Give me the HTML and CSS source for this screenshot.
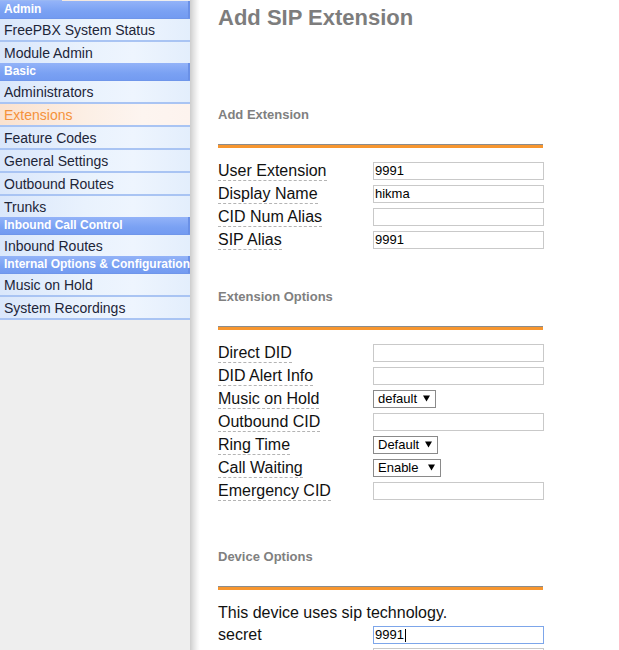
FILE: index.html
```html
<!DOCTYPE html>
<html lang="en">
<head>
<meta charset="utf-8">
<title>Add SIP Extension</title>
<link rel="stylesheet" href="styles.css">
</head>
<body>
<div class="page">
  <nav class="sidebar">
    <div class="tabstrip"><span class="tab-a"></span><span class="tab-b"></span></div>
    <div class="menu">
      <div class="cat">Admin</div>
      <a class="item">FreePBX System Status</a>
      <a class="item">Module Admin</a>
      <div class="cat">Basic</div>
      <a class="item">Administrators</a>
      <a class="item active">Extensions</a>
      <a class="item">Feature Codes</a>
      <a class="item">General Settings</a>
      <a class="item">Outbound Routes</a>
      <a class="item">Trunks</a>
      <div class="cat">Inbound Call Control</div>
      <a class="item">Inbound Routes</a>
      <div class="cat">Internal Options &amp; Configuration</div>
      <a class="item">Music on Hold</a>
      <a class="item">System Recordings</a>
    </div>
  </nav>
  <div class="shade"></div>
  <main class="content">
    <h1 class="title">Add SIP Extension</h1>

    <h3 class="section section-first">Add Extension</h3>
    <div class="rule"></div>
    <div class="rows">
      <span class="label">User Extension</span><input class="field" value="9991">
      <span class="label">Display Name</span><input class="field" value="hikma">
      <span class="label">CID Num Alias</span><input class="field" value="">
      <span class="label">SIP Alias</span><input class="field" value="9991">
    </div>

    <h3 class="section section-second">Extension Options</h3>
    <div class="rule"></div>
    <div class="rows">
      <span class="label">Direct DID</span><input class="field" value="">
      <span class="label">DID Alert Info</span><input class="field" value="">
      <span class="label">Music on Hold</span>
      <div class="select sel-moh"><span>default</span><svg class="arrow" width="7" height="7" viewBox="0 0 7 7"><polygon points="0,0.5 7,0.5 3.5,6.5" fill="#000"/></svg></div>
      <span class="label">Outbound CID</span><input class="field" value="">
      <span class="label">Ring Time</span>
      <div class="select sel-ring"><span>Default</span><svg class="arrow" width="7" height="7" viewBox="0 0 7 7"><polygon points="0,0.5 7,0.5 3.5,6.5" fill="#000"/></svg></div>
      <span class="label">Call Waiting</span>
      <div class="select sel-cw"><span>Enable</span><svg class="arrow" width="7" height="7" viewBox="0 0 7 7"><polygon points="0,0.5 7,0.5 3.5,6.5" fill="#000"/></svg></div>
      <span class="label">Emergency CID</span><input class="field" value="">
    </div>

    <h3 class="section section-third">Device Options</h3>
    <div class="rule"></div>
    <p class="note">This device uses sip technology.</p>
    <div class="rows rows-device">
      <span class="plain">secret</span><div class="field focused">9991<span class="caret"></span></div>
      <span class="plain"></span><input class="field" value="">
    </div>
  </main>
</div>
</body>
</html>
```

FILE: styles.css
```css
html, body {
  margin: 0;
  padding: 0;
  height: 100%;
  overflow: hidden;
  background: #fff;
}

body {
  font-family: "Liberation Sans", Arial, sans-serif;
  color: #111;
}

.page {
  display: flex;
  min-height: 100vh;
}

/* ---------- sidebar ---------- */
.sidebar {
  width: 190px;
  flex: 0 0 190px;
  background: #eeeeee;
}

.tabstrip {
  display: flex;
  height: 1px;
}
.tab-a { width: 62px; background: #9ab8f4; }
.tab-b { width: 58px; background: #f3e8df; }

.menu {
  display: flex;
  flex-direction: column;
}

.cat {
  box-sizing: border-box;
  height: 18px;
  padding: 2px 4px 0;
  border-bottom: 1px solid #6f96ea;
  font-size: 12px;
  line-height: 13px;
  font-weight: bold;
  color: #fff;
  white-space: nowrap;
  background: linear-gradient(#93b3f8, #7aa1f3 60%, #739bf1);
  box-shadow: inset -2px 0 0 #6a90e6;
}

.item {
  display: block;
  height: 21px;
  padding: 0 4px;
  font-size: 14px;
  line-height: 22px;
  color: #1d2538;
  white-space: nowrap;
  background: linear-gradient(to right, #dae7fb 0%, #e9f2fd 45%, #eef5fe 70%, #e3eefc 100%);
}

.item + .item {
  border-top: 2px solid #a9c4f3;
}

.item:last-child {
  border-bottom: 2px solid #a9c4f3;
}

.item.active {
  color: #f5923a;
  background: linear-gradient(to right, #fbe2cf 0%, #fcefe5 45%, #fdf5f0 75%, #fdf3ee 100%);
}

.shade {
  width: 10px;
  flex: 0 0 10px;
  background: linear-gradient(to right, #cdcdcd, #e2e2e2 35%, #f6f6f6 75%, #fff);
}

/* ---------- content ---------- */
.content {
  width: 325px;
  padding: 5px 0 0 18px;
}

.title {
  margin: 0;
  font-size: 22px;
  line-height: 25px;
  font-weight: bold;
  color: #7d7d7d;
}

.section {
  margin: 0;
  font-size: 13px;
  line-height: 15px;
  font-weight: bold;
  color: #808080;
}

.section-first { margin-top: 77px; }
.section-second { margin-top: 38px; }
.section-third { margin-top: 47px; }

.rule {
  height: 3px;
  margin: 22px 0 11px;
  border-top: 1px solid #8c8c8c;
  background: #f7962f;
}

.rows {
  display: grid;
  grid-template-columns: 155px 170px;
  grid-auto-rows: 23px;
  align-items: center;
}

.rows-device {
  grid-auto-rows: 22px;
}

.label,
.plain {
  justify-self: start;
  font-size: 16px;
  color: #111;
}

.label {
  line-height: 18px;
  margin-top: 1px;
  border-bottom: 1px dashed #b4b4b4;
}

.plain {
  line-height: 20px;
}

.field {
  box-sizing: border-box;
  width: 171px;
  height: 18px;
  margin: 0;
  padding: 0 1px;
  border: 1px solid #c9c9c9;
  background: #fff;
  font-family: "Liberation Sans", Arial, sans-serif;
  font-size: 13px;
  line-height: 16px;
  color: #000;
  outline: none;
}

.focused {
  display: flex;
  align-items: center;
  border-color: #7da6ea;
}

.caret {
  display: inline-block;
  width: 1px;
  height: 13px;
  margin-left: 1px;
  background: #000;
}

.select {
  box-sizing: border-box;
  height: 18px;
  display: flex;
  align-items: center;
  justify-self: start;
  padding: 0 5px 0 4px;
  border: 1px solid #8a8a8a;
  background: #fff;
  font-size: 13px;
  color: #000;
}

.select .arrow {
  margin-left: auto;
}

.sel-moh { width: 63px; }
.sel-ring { width: 65px; }
.sel-cw { width: 68px; }

.note {
  margin: 10px 0 0;
  font-size: 16px;
  line-height: 23px;
  color: #111;
}
```
